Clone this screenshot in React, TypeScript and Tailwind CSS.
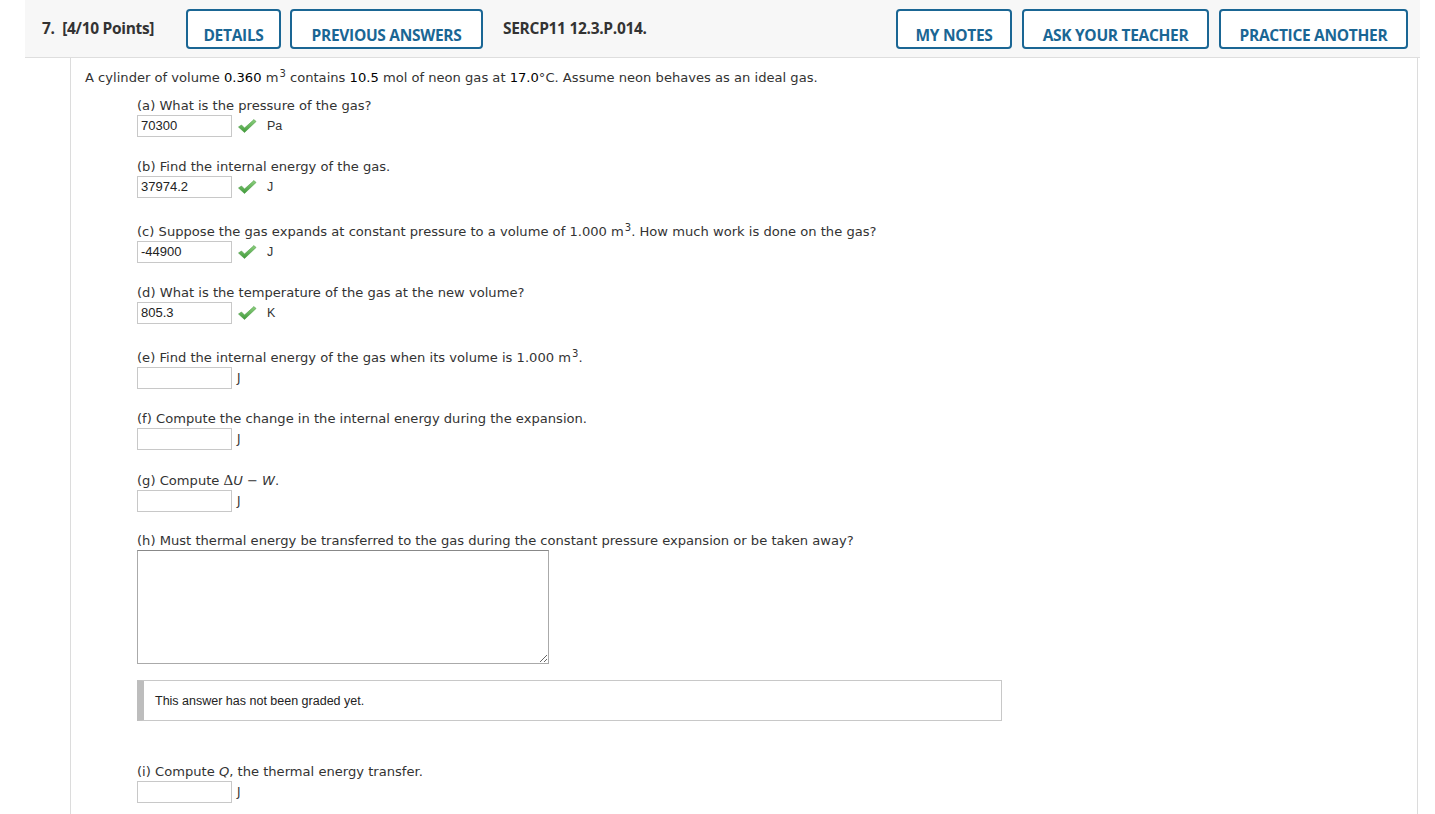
import React from 'react'

const sans = { fontFamily: '"DejaVu Sans", Verdana, sans-serif' }

function Check() {
  return (
    <svg width="22" height="18" viewBox="0 0 22 18" className="shrink-0">
      <defs>
        <linearGradient id="ck" x1="0" y1="0" x2="0" y2="1">
          <stop offset="0" stopColor="#8fd17f" />
          <stop offset="1" stopColor="#3f9a3a" />
        </linearGradient>
      </defs>
      <path d="M2.5 10 L5.5 8 L8.5 11 L18 2.5 L20 4.5 L8.5 15.5 Z" fill="url(#ck)" stroke="#4a9a43" strokeWidth="0.6" strokeLinejoin="round" />
    </svg>
  )
}

function Answer({ value, unit, ok }: { value?: string; unit: string; ok?: boolean }) {
  return (
    <div className="flex items-center h-[22px]">
      <div className="w-[95px] h-[22px] border border-[#c8c8c8] bg-white px-[3px] flex items-center text-[13px] text-[#222] font-['Liberation_Sans',Arial,sans-serif]">
        {value}
      </div>
      {ok ? (
        <>
          <span className="ml-[4px]"><Check /></span>
          <span className="ml-[9px] text-[12.5px] text-[#333] font-['Liberation_Sans',Arial,sans-serif]">{unit}</span>
        </>
      ) : (
        <span className="ml-[5px] text-[12px] text-[#333]">{unit}</span>
      )}
    </div>
  )
}

function Btn({ label, w }: { label: string; w: string }) {
  return (
    <div className={`${w} h-[40px] border-2 border-[#1a6694] rounded-[4px] bg-white flex justify-center pt-[14px] text-[15.5px] font-bold text-[#1a6694] leading-[20px] tracking-[-0.3px]`}>
      {label}
    </div>
  )
}

const sup = <sup className="text-[10px] relative -top-[5px] ml-[1px] leading-none">3</sup>

export default function App() {
  return (
    <div className="w-[1435px] h-[814px] overflow-hidden bg-white">
      <div className="pl-[25px] pr-[15px]">
        <div className="h-[58px] bg-[#f7f7f7] border-b border-[#dedede] flex items-start pl-[17px] pr-[12px] pt-[9px] font-['Open_Sans',sans-serif]">
          <div className="w-[144px] h-[40px] flex items-center pb-[1px] text-[15.5px] font-bold text-[#333] tracking-[-0.3px]">
            7.&nbsp; [4/10 Points]
          </div>
          <Btn label="DETAILS" w="w-[95px]" />
          <div className="ml-[9px]"><Btn label="PREVIOUS ANSWERS" w="w-[193px]" /></div>
          <div className="ml-[20px] h-[40px] flex items-center pb-[1px] text-[15.5px] font-bold text-[#333] tracking-[-0.3px]">
            SERCP11 12.3.P.014.
          </div>
          <div className="ml-auto flex gap-[10px]">
            <Btn label="MY NOTES" w="w-[116px]" />
            <Btn label="ASK YOUR TEACHER" w="w-[187px]" />
            <Btn label="PRACTICE ANOTHER" w="w-[189px]" />
          </div>
        </div>

        <div className="ml-[45px] mr-[2px] h-[760px] border-l border-r border-[#dcdcdc] pl-[14px] pt-[11px] text-[13.1px] text-[#333] leading-[18px]" style={sans}>
          <div>
            A cylinder of volume <span className="text-black">0.360</span> m{sup} contains <span className="text-black">10.5</span> mol of neon gas at <span className="text-black">17.0</span>°C. Assume neon behaves as an ideal gas.
          </div>

          <div className="ml-[52px]">
            <div className="mt-[10px]">(a) What is the pressure of the gas?</div>
            <Answer value="70300" unit="Pa" ok />

            <div className="mt-[21px]">(b) Find the internal energy of the gas.</div>
            <Answer value="37974.2" unit="J" ok />

            <div className="mt-[25px]">(c) Suppose the gas expands at constant pressure to a volume of 1.000 m{sup}. How much work is done on the gas?</div>
            <Answer value="-44900" unit="J" ok />

            <div className="mt-[21px]">(d) What is the temperature of the gas at the new volume?</div>
            <Answer value="805.3" unit="K" ok />

            <div className="mt-[25px]">(e) Find the internal energy of the gas when its volume is 1.000 m{sup}.</div>
            <Answer unit="J" />

            <div className="mt-[21px]">(f) Compute the change in the internal energy during the expansion.</div>
            <Answer unit="J" />

            <div className="mt-[21px]">(g) Compute <span className="font-['Liberation_Serif',serif] text-[15px]">Δ</span><i>U</i> − <i>W</i>.</div>
            <Answer unit="J" />

            <div className="mt-[20px]">(h) Must thermal energy be transferred to the gas during the constant pressure expansion or be taken away?</div>
            <textarea className="block w-[412px] h-[114px] border border-[#aaa] border-t-[#888] bg-white resize" />

            <div className="mt-[16px] w-[865px] h-[41px] border border-[#c8c8c8] border-l-[7px] border-l-[#bdbdbd] flex items-center pl-[11px] text-[12.5px] text-[#222] font-['Liberation_Sans',Arial,sans-serif]">
              This answer has not been graded yet.
            </div>

            <div className="mt-[42px]">(i) Compute <i>Q</i>, the thermal energy transfer.</div>
            <Answer unit="J" />
          </div>
        </div>
      </div>
    </div>
  )
}
